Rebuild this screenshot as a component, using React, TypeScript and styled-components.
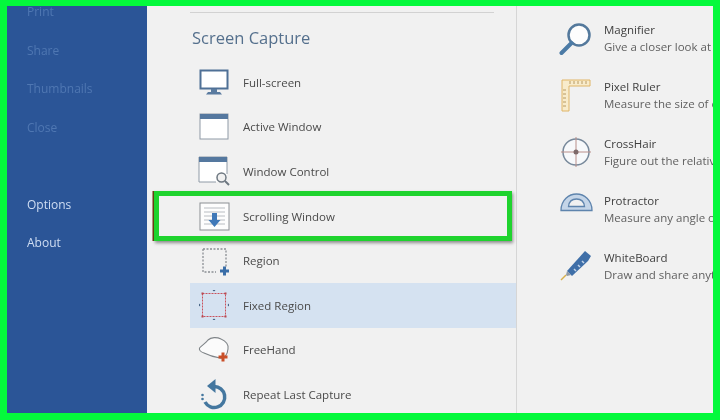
import React from "react";
import styled, { createGlobalStyle } from "styled-components";

const Global = createGlobalStyle`
  html, body { margin: 0; padding: 0; background: #f1f1f1; }
  body { font-family: "Open Sans", "Noto Sans", "Liberation Sans", sans-serif; }
`;

const Frame = styled.div`
  box-sizing: border-box;
  width: 720px;
  height: 420px;
  border: solid #04f93c;
  border-width: 6px 7px 7px 7px;
  display: flex;
  overflow: hidden;
  background: #f1f1f1;
`;

const Sidebar = styled.nav`
  width: 140px;
  flex: none;
  background: #2b5597;
  padding: 0 0 0 20px;
  box-sizing: border-box;
`;

const NavList = styled.div`
  margin-top: -13px;
  display: flex;
  flex-direction: column;
  filter: blur(0.35px);
`;

const NavItem = styled.div<{ $on?: boolean; $gap?: boolean }>`
  height: 38.5px;
  line-height: 38.5px;
  font-size: 12px;
  color: ${(p) => (p.$on ? "#d0def3" : "#4f77b2")};
  margin-top: ${(p) => (p.$gap ? "38.5px" : "0")};
`;

const Middle = styled.section`
  width: 370px;
  flex: none;
  box-sizing: border-box;
  padding: 6px 0 0 43px;
  border-right: 1px solid #d6d6d6;
  filter: blur(0.35px);
`;

const TopRule = styled.div`
  height: 1px;
  width: 304px;
  background: #d2d2d2;
`;

const Heading = styled.h2`
  margin: 14px 0 0;
  padding-left: 2px;
  height: 22px;
  line-height: 22px;
  font-size: 16.5px;
  font-weight: 400;
  color: #55708d;
`;

const Rows = styled.div`
  margin-top: 11px;
  display: flex;
  flex-direction: column;
`;

const Row = styled.div<{ $selected?: boolean; $marked?: boolean }>`
  position: relative;
  height: 44.6px;
  display: flex;
  align-items: center;
  background: ${(p) => (p.$selected ? "#d5e2f1" : "transparent")};
  ${(p) =>
    p.$marked
      ? `&::after {
          content: "";
          position: absolute;
          left: -36px;
          right: 4px;
          top: -3px;
          bottom: -3px;
          border: 5px solid #1fd32e;
          box-shadow: -1.5px 0 0 #6b3d14, 1px 2px 3px rgba(60,60,60,.55);
          pointer-events: none;
        }`
      : ""}
`;

const IconSlot = styled.div`
  width: 53px;
  flex: none;
  display: flex;
  justify-content: center;
  padding-right: 5px;
  box-sizing: border-box;
`;

const RowLabel = styled.span`
  font-size: 11.5px;
  color: #4a4a4a;
`;

const Side = styled.section`
  flex: 1;
  min-width: 0;
  overflow: hidden;
  padding: 15px 0 0 40px;
  display: flex;
  flex-direction: column;
  filter: blur(0.35px);
`;

const Tool = styled.div`
  height: 57px;
  display: flex;
  white-space: nowrap;
`;

const ToolIcon = styled.div`
  width: 47px;
  flex: none;
  display: flex;
  justify-content: center;
  padding: 1px 9px 0 0;
  box-sizing: border-box;
`;

const ToolText = styled.div`
  display: flex;
  flex-direction: column;
`;

const ToolTitle = styled.span`
  font-size: 11.5px;
  line-height: 17px;
  color: #404040;
`;

const ToolDesc = styled.span`
  font-size: 11.5px;
  line-height: 17px;
  color: #606060;
`;

const Monitor = () => (
  <svg width="30" height="27" viewBox="0 0 30 27">
    <rect x="1.5" y="1.5" width="27" height="18" fill="#fff" stroke="#4f7096" strokeWidth="2" />
    <path d="M12 20h6v3h3l2 2.5H7L9 23h3z" fill="#5a7ba0" />
  </svg>
);
const ActiveWin = () => (
  <svg width="30" height="27" viewBox="0 0 30 27">
    <rect x="1" y="1" width="28" height="25" fill="#fff" stroke="#8f9aa6" />
    <rect x="1" y="1" width="28" height="5" fill="#55789f" />
  </svg>
);
const ControlWin = () => (
  <svg width="33" height="30" viewBox="0 0 33 30">
    <rect x="1" y="1" width="28" height="25" fill="#fff" />
    <path d="M1 26V1h28v17M1 26h17" fill="none" stroke="#8f9aa6" />
    <rect x="1" y="1" width="28" height="5" fill="#55789f" />
    <circle cx="23.5" cy="21.5" r="4.5" fill="#f1f1f1" stroke="#6d7780" strokeWidth="1.5" />
    <path d="M27 25l4 4" stroke="#6d7780" strokeWidth="2" />
  </svg>
);
const Scrolling = () => (
  <svg width="31" height="29" viewBox="0 0 31 29">
    <rect x="1" y="1" width="29" height="27" fill="#fdfdfd" stroke="#8b8f94" />
    <path d="M5 6h21M5 10h21M5 14h21M5 18h21M5 22h21" stroke="#b9bdc2" />
    <path d="M13 11h5v7h3.500L15.500 25 9.500 18H13z" fill="#3f78b8" />
  </svg>
);
const Region = () => (
  <svg width="33" height="30" viewBox="0 0 33 30">
    <path d="M5 3h23v18M5 3v23h13" fill="none" stroke="#8b8f94" strokeWidth="1.300" strokeDasharray="2 1.500" />
    <path d="M26.500 20.500v9M22 25h9" stroke="#3a6ea8" strokeWidth="3" />
  </svg>
);
const Fixed = () => (
  <svg width="30" height="30" viewBox="0 0 30 30">
    <path d="M3.500 3.500h23v23h-23z" fill="none" stroke="#c9525c" strokeWidth="1" strokeDasharray="2 1" />
    <rect x="2.500" y="2.500" width="2" height="2" fill="#b8474f" />
    <rect x="25.500" y="2.500" width="2" height="2" fill="#b8474f" />
    <rect x="2.500" y="25.500" width="2" height="2" fill="#b8474f" />
    <rect x="25.500" y="25.500" width="2" height="2" fill="#b8474f" />
    <path d="M13.500 0h3L15 1.500zM13.500 30h3L15 28.500zM0 13.500v3L1.500 15zM30 13.500v3L28.500 15z" fill="#3b5a7d" />
  </svg>
);
const FreeHand = () => (
  <svg width="33" height="27" viewBox="0 0 33 27">
    <path d="M1.500 12C4 9 8 7 10 4 13 1 19 1 23 3c5 2 8 6 7 10-.5 6-4 10-8 9-6-1-12-3-16-5-3-1-5-3-4.500-5z" fill="#fbfbfb" stroke="#7f8488" strokeWidth="1.100" />
    <path d="M25 16.500v9M20.500 21h9" stroke="#c94f28" strokeWidth="3" />
  </svg>
);
const Repeat = () => (
  <svg width="30" height="33" viewBox="0 0 30 33">
    <path d="M15 8.500a10.500 10.500 0 1 1-9 15.500" fill="none" stroke="#44779f" strokeWidth="3.500" />
    <path d="M16.500 1v14L8 8z" fill="#44779f" />
    <circle cx="3.500" cy="17" r="1.300" fill="#44779f" />
    <circle cx="3.500" cy="21" r="1.300" fill="#44779f" />
  </svg>
);
const Magnifier = () => (
  <svg width="34" height="34" viewBox="0 0 34 34">
    <circle cx="20" cy="13" r="10.500" fill="#fdfdfd" stroke="#54799c" strokeWidth="2.500" />
    <path d="M12.500 21L2.500 31" stroke="#4c7ba6" strokeWidth="4" strokeLinecap="round" />
  </svg>
);
const Ruler = () => (
  <svg width="30" height="33" viewBox="0 0 30 33">
    <path d="M1 1h28v6H8v25H1z" fill="#f8ebcb" stroke="#e0b566" />
    <path d="M9 2v3M13 2v3M17 2v3M21 2v3M25 2v3M2 11h3M2 15h3M2 19h3M2 23h3M2 27h3" stroke="#b89a63" />
  </svg>
);
const Cross = () => (
  <svg width="30" height="32" viewBox="0 0 30 32">
    <circle cx="15" cy="16" r="13" fill="#f7f9fb" stroke="#78899b" strokeWidth="1.500" />
    <path d="M15 1v30M0 16h30" stroke="#b98f8a" />
    <circle cx="15" cy="16" r="2.500" fill="#7d6a6a" />
  </svg>
);
const Protractor = () => (
  <svg width="33" height="19" viewBox="0 0 33 19">
    <path d="M1 17.500C1 7 9 1 16.500 1S32 7 32 17.500z" fill="#c4d5e8" stroke="#5e84ad" strokeWidth="1.300" />
    <path d="M8.500 13.500C9 8.500 12.500 6 16.500 6s7.500 2.500 8 7.500z" fill="#f1f1f1" stroke="#5e84ad" strokeWidth="1.300" />
  </svg>
);
const Pen = () => (
  <svg width="32" height="31" viewBox="0 0 32 31">
    <path d="M25 1l6 5-3 5-16 15-5-5z" fill="#3f6fa8" />
    <path d="M14 19l2 2M18 15l2 2M22 11l2 2" stroke="#c2d4e8" strokeWidth="1.500" />
    <path d="M7 21l4 4-4 1-1-1z" fill="#8f9aa6" />
    <path d="M6 25L1 30" stroke="#d7b04c" strokeWidth="1.500" />
  </svg>
);

const captures = [
  { label: "Full-screen", icon: <Monitor /> },
  { label: "Active Window", icon: <ActiveWin /> },
  { label: "Window Control", icon: <ControlWin /> },
  { label: "Scrolling Window", icon: <Scrolling />, marked: true },
  { label: "Region", icon: <Region /> },
  { label: "Fixed Region", icon: <Fixed />, selected: true },
  { label: "FreeHand", icon: <FreeHand /> },
  { label: "Repeat Last Capture", icon: <Repeat /> },
];

const tools = [
  { title: "Magnifier", desc: "Give a closer look at your screen", icon: <Magnifier /> },
  { title: "Pixel Ruler", desc: "Measure the size of on-screen", icon: <Ruler /> },
  { title: "CrossHair", desc: "Figure out the relative position", icon: <Cross /> },
  { title: "Protractor", desc: "Measure any angle on screen", icon: <Protractor /> },
  { title: "WhiteBoard", desc: "Draw and share anything", icon: <Pen /> },
];

export default function App() {
  return (
    <>
      <Global />
      <Frame>
        <Sidebar>
          <NavList>
            <NavItem>Print</NavItem>
            <NavItem>Share</NavItem>
            <NavItem>Thumbnails</NavItem>
            <NavItem>Close</NavItem>
            <NavItem $on $gap>Options</NavItem>
            <NavItem $on>About</NavItem>
          </NavList>
        </Sidebar>
        <Middle>
          <TopRule />
          <Heading>Screen Capture</Heading>
          <Rows>
            {captures.map((c) => (
              <Row key={c.label} $selected={c.selected} $marked={c.marked}>
                <IconSlot>{c.icon}</IconSlot>
                <RowLabel>{c.label}</RowLabel>
              </Row>
            ))}
          </Rows>
        </Middle>
        <Side>
          {tools.map((t) => (
            <Tool key={t.title}>
              <ToolIcon>{t.icon}</ToolIcon>
              <ToolText>
                <ToolTitle>{t.title}</ToolTitle>
                <ToolDesc>{t.desc}</ToolDesc>
              </ToolText>
            </Tool>
          ))}
        </Side>
      </Frame>
    </>
  );
}
